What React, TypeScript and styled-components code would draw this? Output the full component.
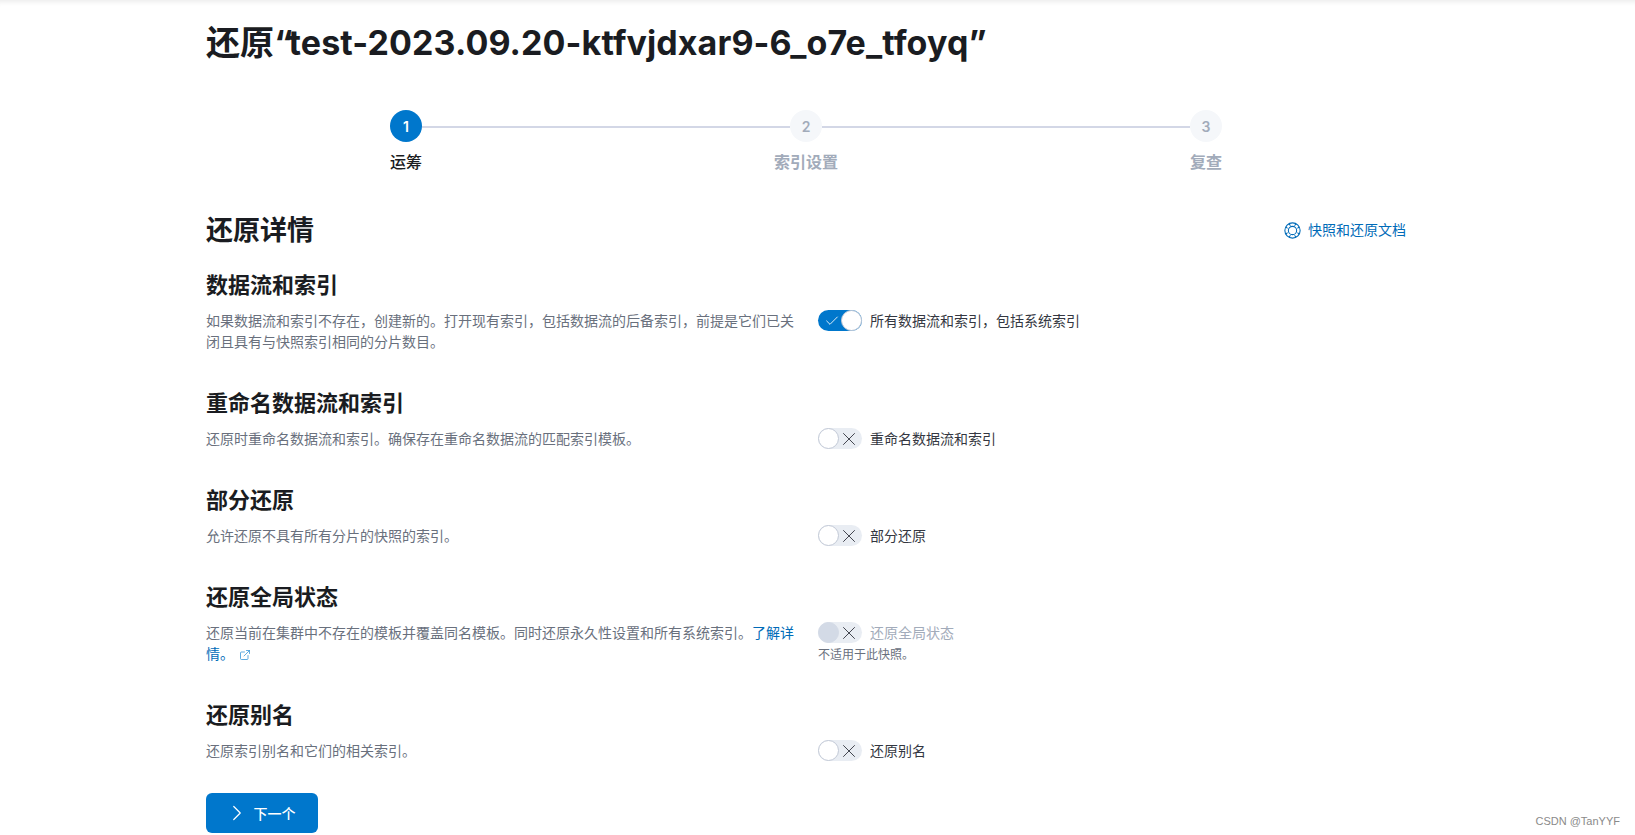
import React from 'react';
import styled, { createGlobalStyle } from 'styled-components';
import { Check, ChevronRight, ExternalLink, X } from 'lucide-react';

const GlobalStyle = createGlobalStyle`
  html, body {
    margin: 0;
    height: 100%;
    background: #fff;
    overflow: hidden;
  }
  body {
    font-family: Inter, "Noto Sans CJK SC", "Liberation Sans", sans-serif;
    color: #1a1c21;
  }
`;

const Page = styled.div`
  position: relative;
  box-sizing: border-box;
  width: 1635px;
  height: 835px;
  padding: 0 229px 0 206px;
  overflow: hidden;
  box-shadow: inset 0 6px 5px -4px rgba(0, 0, 0, 0.08);
`;

const Title = styled.h1`
  margin: 0;
  padding-top: 19px;
  font-size: 34px;
  line-height: 48px;
  font-weight: 700;
  letter-spacing: 0.1px;
  color: #1a1c21;
  white-space: nowrap;
`;

const OpenQuote = styled.span`
  letter-spacing: -4px;
`;

const Steps = styled.div`
  display: flex;
  justify-content: space-between;
  margin: 43px 200px 0 168px;
  width: 864px;
`;

const Step = styled.div`
  position: relative;
  width: 64px;
  display: flex;
  flex-direction: column;
  align-items: center;

  &:not(:last-child)::after {
    content: '';
    position: absolute;
    top: 16px;
    left: 48px;
    width: 368px;
    height: 2px;
    background: #d3d7e6;
  }
`;

const StepCircle = styled.div<{ $active: boolean }>`
  width: 32px;
  height: 32px;
  border-radius: 50%;
  display: flex;
  align-items: center;
  justify-content: center;
  font-size: 14px;
  font-weight: 600;
  background: ${(props) => (props.$active ? '#0077cc' : '#f5f7fa')};
  color: ${(props) => (props.$active ? '#fff' : '#a2abba')};
`;

const StepLabel = styled.div<{ $active: boolean }>`
  margin-top: 8px;
  font-size: 16px;
  line-height: 24px;
  white-space: nowrap;
  font-weight: ${(props) => (props.$active ? 500 : 600)};
  color: ${(props) => (props.$active ? '#1a1c21' : '#a2abba')};
`;

const DetailsHeader = styled.div`
  display: flex;
  justify-content: space-between;
  align-items: center;
  margin-top: 37px;
`;

const SectionTitle = styled.h2`
  margin: 0;
  font-size: 27px;
  line-height: 40px;
  font-weight: 700;
`;

const DocsLink = styled.a`
  display: flex;
  align-items: center;
  gap: 7px;
  margin-bottom: 2px;
  font-size: 14px;
  line-height: 20px;
  color: #006bb8;
`;

const FormList = styled.div`
  margin-top: 18px;
`;

const FormRow = styled.div<{ $gap: number }>`
  display: grid;
  grid-template-columns: 589px 1fr;
  column-gap: 23px;
  margin-bottom: ${(props) => props.$gap}px;
`;

const RowTitle = styled.h3`
  grid-column: 1 / -1;
  margin: 0 0 9px;
  font-size: 22px;
  line-height: 32px;
  font-weight: 700;
`;

const Description = styled.p`
  margin: 0;
  font-size: 14px;
  line-height: 21px;
  color: #69707d;
`;

const DocLink = styled.a`
  color: #006bb8;

  svg {
    margin-left: 5px;
    vertical-align: -2px;
    color: #2b8fd6;
  }
`;

const FieldColumn = styled.div`
  display: flex;
  flex-direction: column;
`;

const SwitchField = styled.div`
  display: flex;
  align-items: center;
  gap: 8px;
  height: 21px;
`;

const SwitchTrack = styled.div<{ $on: boolean; $disabled: boolean }>`
  position: relative;
  flex: none;
  width: 44px;
  height: 21px;
  border-radius: 11px;
  display: flex;
  align-items: center;
  justify-content: ${(props) => (props.$on ? 'flex-start' : 'flex-end')};
  padding: ${(props) => (props.$on ? '0 6px' : '0 2px')};
  box-sizing: border-box;
  color: ${(props) => (props.$on ? '#fff' : '#343741')};
  background: ${(props) => (props.$on ? '#0077cc' : '#e9edf3')};
`;

const SwitchThumb = styled.span<{ $on: boolean; $disabled: boolean }>`
  position: absolute;
  top: 0;
  left: ${(props) => (props.$on ? '23px' : '0')};
  box-sizing: border-box;
  width: 21px;
  height: 21px;
  border-radius: 50%;
  background: ${(props) => (props.$disabled ? '#d3dae6' : '#fff')};
  border: 1px solid ${(props) => (props.$disabled ? '#d3dae6' : '#c2c9d6')};
`;

const SwitchLabel = styled.span<{ $disabled: boolean }>`
  font-size: 14px;
  line-height: 20px;
  white-space: nowrap;
  color: ${(props) => (props.$disabled ? '#a2abba' : '#343741')};
`;

const HelpText = styled.div`
  margin-top: 3px;
  font-size: 12px;
  line-height: 18px;
  color: #69707d;
`;

const NextButton = styled.button`
  display: flex;
  align-items: center;
  justify-content: center;
  gap: 4px;
  width: 112px;
  height: 40px;
  padding: 0 5px 0 0;
  border: none;
  border-radius: 6px;
  background: #0077cc;
  color: #fff;
  font-family: inherit;
  font-size: 14px;
  font-weight: 500;
`;

const Watermark = styled.div`
  position: absolute;
  right: 15px;
  bottom: 6px;
  font-family: "Liberation Sans", sans-serif;
  font-size: 11px;
  line-height: 16px;
  color: #8a8a8a;
`;

const HelpIcon: React.FC = () => (
  <svg width="17" height="17" viewBox="0 0 16 16" fill="none" stroke="currentColor" strokeWidth="1">
    <circle cx="8" cy="8" r="7.2" />
    <circle cx="8" cy="8" r="3.9" />
    <path d="M9.9 3.3 11.4 1.8M12.7 6.1 14.2 4.6M3.3 6.1 1.8 4.6M6.1 3.3 4.6 1.8M3.3 9.9 1.8 11.4M6.1 12.7 4.6 14.2M12.7 9.9 14.2 11.4M9.9 12.7 11.4 14.2" />
  </svg>
);

const Switch: React.FC<{ label: string; on?: boolean; disabled?: boolean }> = ({
  label,
  on = false,
  disabled = false,
}) => (
  <SwitchField>
    <SwitchTrack $on={on} $disabled={disabled}>
      {on ? <Check size={16} strokeWidth={1.3} /> : <X size={22} strokeWidth={1} />}
      <SwitchThumb $on={on} $disabled={disabled} />
    </SwitchTrack>
    <SwitchLabel $disabled={disabled}>{label}</SwitchLabel>
  </SwitchField>
);

const steps = ['运筹', '索引设置', '复查'];

export default function App() {
  return (
    <Page>
      <GlobalStyle />
      <Title>
        还原<OpenQuote>“</OpenQuote>test-2023.09.20-ktfvjdxar9-6_o7e_tfoyq”
      </Title>

      <Steps>
        {steps.map((label, i) => (
          <Step key={label}>
            <StepCircle $active={i === 0}>{i + 1}</StepCircle>
            <StepLabel $active={i === 0}>{label}</StepLabel>
          </Step>
        ))}
      </Steps>

      <DetailsHeader>
        <SectionTitle>还原详情</SectionTitle>
        <DocsLink>
          <HelpIcon />
          快照和还原文档
        </DocsLink>
      </DetailsHeader>

      <FormList>
        <FormRow $gap={35}>
          <RowTitle>数据流和索引</RowTitle>
          <Description>
            如果数据流和索引不存在，创建新的。打开现有索引，包括数据流的后备索引，前提是它们已关闭且具有与快照索引相同的分片数目。
          </Description>
          <FieldColumn>
            <Switch on label="所有数据流和索引，包括系统索引" />
          </FieldColumn>
        </FormRow>

        <FormRow $gap={35}>
          <RowTitle>重命名数据流和索引</RowTitle>
          <Description>还原时重命名数据流和索引。确保存在重命名数据流的匹配索引模板。</Description>
          <FieldColumn>
            <Switch label="重命名数据流和索引" />
          </FieldColumn>
        </FormRow>

        <FormRow $gap={35}>
          <RowTitle>部分还原</RowTitle>
          <Description>允许还原不具有所有分片的快照的索引。</Description>
          <FieldColumn>
            <Switch label="部分还原" />
          </FieldColumn>
        </FormRow>

        <FormRow $gap={35}>
          <RowTitle>还原全局状态</RowTitle>
          <Description>
            还原当前在集群中不存在的模板并覆盖同名模板。同时还原永久性设置和所有系统索引。
            <DocLink>
              了解详情。
              <ExternalLink size={12} strokeWidth={1.5} />
            </DocLink>
          </Description>
          <FieldColumn>
            <Switch disabled label="还原全局状态" />
            <HelpText>不适用于此快照。</HelpText>
          </FieldColumn>
        </FormRow>

        <FormRow $gap={32}>
          <RowTitle>还原别名</RowTitle>
          <Description>还原索引别名和它们的相关索引。</Description>
          <FieldColumn>
            <Switch label="还原别名" />
          </FieldColumn>
        </FormRow>
      </FormList>

      <NextButton>
        <ChevronRight size={26} strokeWidth={1.1} />
        下一个
      </NextButton>

      <Watermark>CSDN @TanYYF</Watermark>
    </Page>
  );
}
